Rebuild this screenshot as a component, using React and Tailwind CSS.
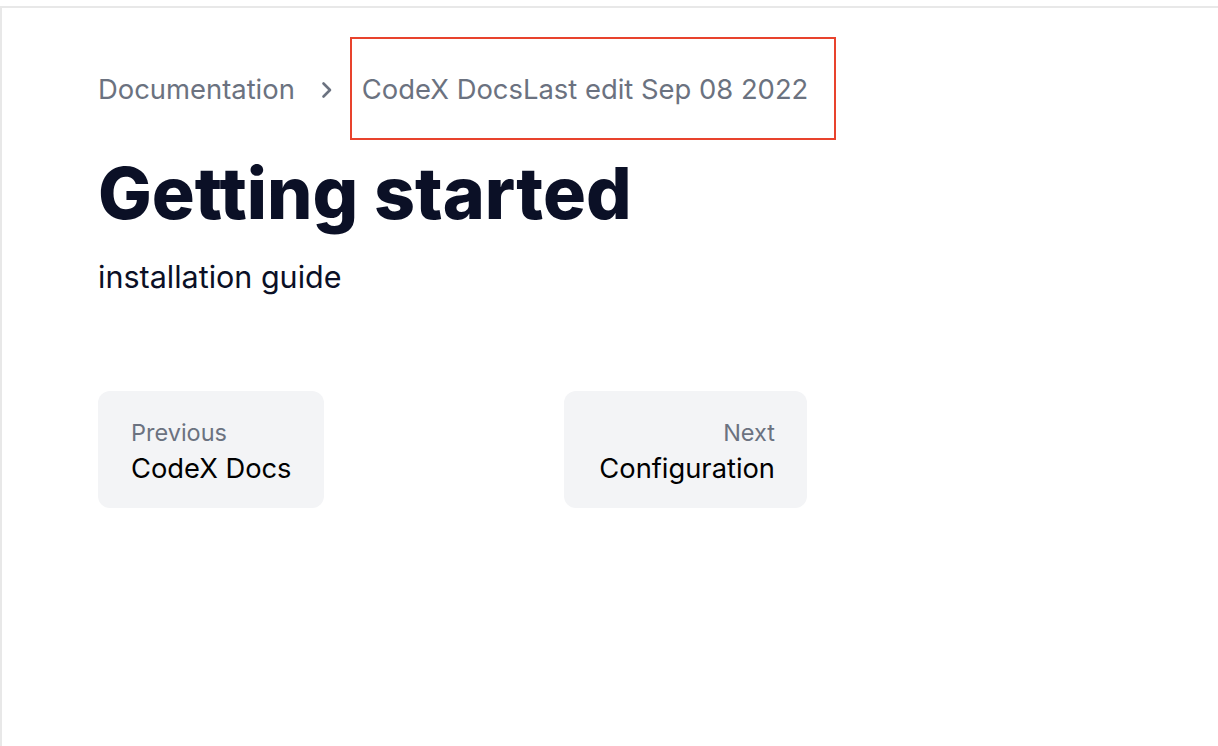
export default function App() {
  return (
    <div className="min-h-screen bg-white pt-[6px]" style={{ fontFamily: 'Inter, "Noto Sans", sans-serif' }}>
      <div className="min-h-[740px] border-t-2 border-l-2 border-[#e8e8e8] pl-[96px] pt-[29px]">
        {/* Breadcrumb */}
        <div className="flex items-center text-[27.4px] text-[#6b7280] h-[103px] pt-[2px]">
          <span>Documentation</span>
          <svg className="ml-[26px] mr-[17px]" width="12" height="18" viewBox="0 0 12 18" fill="none">
            <path d="M2.5 2.5 L9 9 L2.5 15.5" stroke="#6b7280" strokeWidth="2.6" strokeLinecap="round" strokeLinejoin="round" />
          </svg>
          <span className="h-[103px] -mt-[2px] flex items-center border-2 border-[#e8432d] pl-[10px] pr-[26px] pt-[3px]">
            CodeX DocsLast edit Sep 08 2022
          </span>
        </div>

        {/* Title */}
        <h1 className="mt-[13px] text-[71.6px] leading-[80px] font-extrabold text-[#0b1026]">
          Getting started
        </h1>
        <p className="mt-[26px] text-[30.5px] leading-[36px] text-[#0b1026]">installation guide</p>

        {/* Pager */}
        <div className="mt-[96px] flex justify-between w-[709px]">
          <div className="bg-[#f3f4f6] rounded-[12px] w-[226px] h-[117px] px-[33px] pt-[4px] flex flex-col justify-center">
            <span className="text-[23.5px] leading-[34px] text-[#6b7280]">Previous</span>
            <span className="text-[27.3px] leading-[38px] text-black whitespace-nowrap">CodeX Docs</span>
          </div>
          <div className="bg-[#f3f4f6] rounded-[12px] w-[243px] h-[117px] px-[32px] pt-[4px] flex flex-col justify-center items-end">
            <span className="text-[23.5px] leading-[34px] text-[#6b7280]">Next</span>
            <span className="text-[27.3px] leading-[38px] text-black whitespace-nowrap">Configuration</span>
          </div>
        </div>
      </div>
    </div>
  );
}
